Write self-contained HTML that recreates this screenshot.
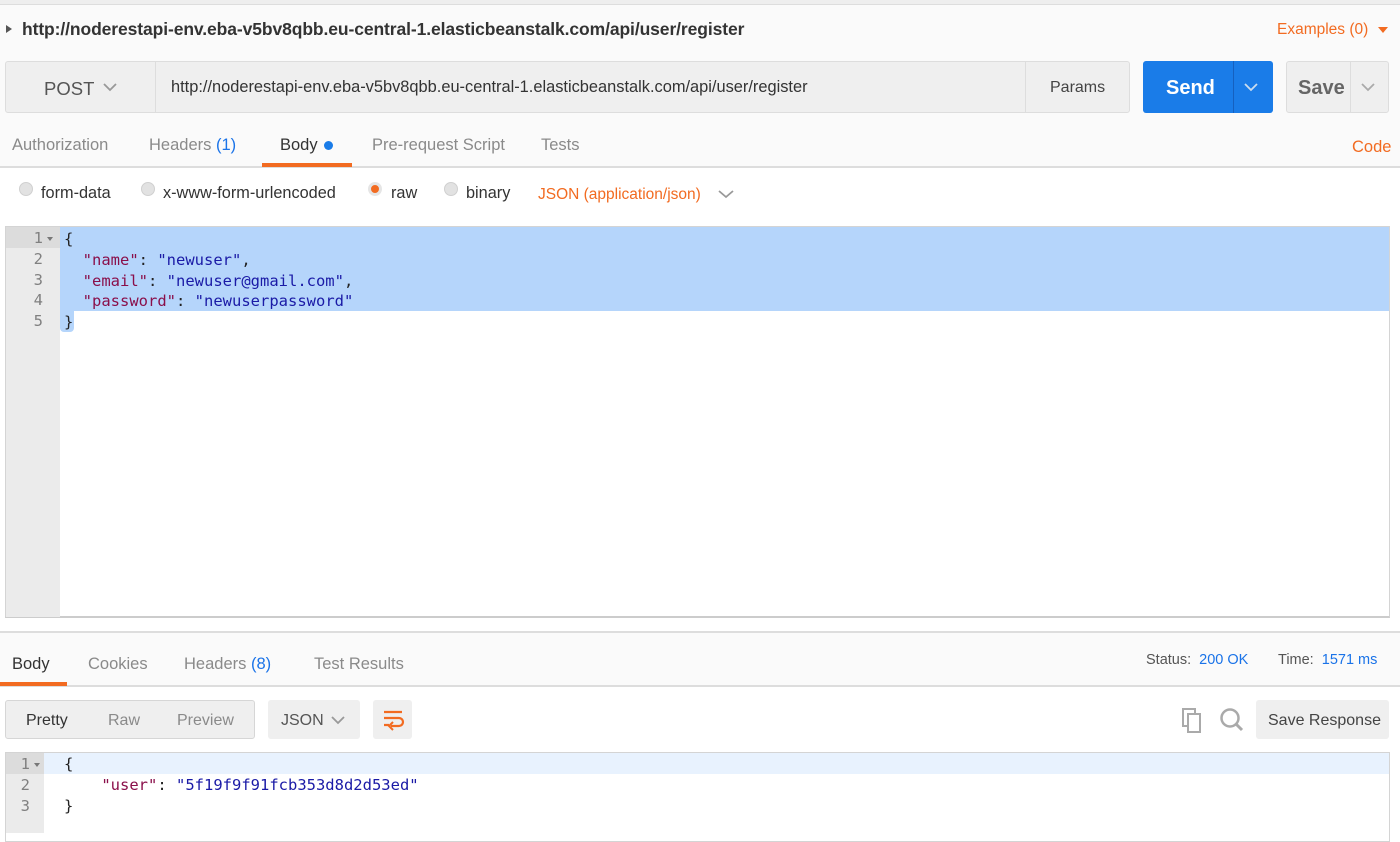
<!DOCTYPE html>
<html><head><meta charset="utf-8"><style>
*{box-sizing:border-box;margin:0;padding:0}
body{width:1400px;height:832px;overflow:hidden;background:#fff;font-family:"Liberation Sans",sans-serif;position:relative;color:#333}
.a{position:absolute}
.mono{font-family:"DejaVu Sans Mono","Liberation Mono",monospace;font-size:15.5px}
.gray{color:#808080}
.tab{font-size:16.5px;color:#8a8a8a}
.blue{color:#1a73e8}
.or{color:#f26b21}
.radio{width:14px;height:14px;border-radius:50%;background:#e2e2e2;border:1px solid #d0d0d0}
.k{color:#8a0f4a}.s{color:#1a1aa6}
</style></head><body>
<div class="a" style="left:0;top:0;width:1400px;height:167px;background:#fafafa"></div>
<div class="a" style="left:0;top:0;width:1400px;height:5px;background:#eee;border-bottom:1px solid #ddd"></div>
<div class="a" style="left:6px;top:25px;width:0;height:0;border-left:6px solid #555;border-top:4px solid transparent;border-bottom:4px solid transparent"></div>
<div class="a" style="left:22px;top:19px;font-size:17.5px;color:#333;font-weight:bold;letter-spacing:-0.1px">http://noderestapi-env.eba-v5bv8qbb.eu-central-1.elasticbeanstalk.com/api/user/register</div>
<div class="a or" style="left:1277px;top:21px;font-size:15.5px">Examples (0)</div>
<div class="a" style="left:1378px;top:27px;border-top:6px solid #f26b21;border-left:5px solid transparent;border-right:5px solid transparent"></div>

<div class="a" style="left:5px;top:61px;width:1125px;height:52px;background:#efefef;border:1px solid #ddd;border-radius:3px"></div>
<div class="a" style="left:155px;top:62px;width:1px;height:50px;background:#ddd"></div>
<div class="a" style="left:1025px;top:62px;width:1px;height:50px;background:#ddd"></div>
<div class="a" style="left:44px;top:78px;font-size:18.5px;color:#555">POST</div>
<svg class="a" style="left:102px;top:82px" width="16" height="10"><path d="M2 2l6 6 6-6" stroke="#999" stroke-width="1.8" fill="none"/></svg>
<div class="a" style="left:171px;top:78px;font-size:16.4px;color:#333">http://noderestapi-env.eba-v5bv8qbb.eu-central-1.elasticbeanstalk.com/api/user/register</div>
<div class="a" style="left:1050px;top:79px;font-size:16px;color:#444">Params</div>
<div class="a" style="left:1143px;top:61px;width:130px;height:52px;background:#1a7ce8;border-radius:3px"></div>
<div class="a" style="left:1233px;top:61px;width:1px;height:52px;background:#1560bf"></div>
<div class="a" style="left:1166px;top:77px;font-size:20px;color:#fff;font-weight:bold">Send</div>
<svg class="a" style="left:1243px;top:82px" width="16" height="10"><path d="M2 2l6 6 6-6" stroke="#cde" stroke-width="1.8" fill="none"/></svg>
<div class="a" style="left:1286px;top:61px;width:103px;height:52px;background:#efefef;border:1px solid #ddd;border-radius:3px"></div>
<div class="a" style="left:1350px;top:62px;width:1px;height:50px;background:#ddd"></div>
<div class="a" style="left:1298px;top:77px;font-size:20px;color:#666;font-weight:bold">Save</div>
<svg class="a" style="left:1360px;top:82px" width="16" height="10"><path d="M2 2l6 6 6-6" stroke="#aaa" stroke-width="1.8" fill="none"/></svg>

<div class="a tab" style="left:12px;top:136px">Authorization</div>
<div class="a tab" style="left:149px;top:136px">Headers <span class="blue">(1)</span></div>
<div class="a" style="left:280px;top:136px;font-size:16.5px;color:#333">Body</div>
<div class="a" style="left:324px;top:141px;width:9px;height:9px;border-radius:50%;background:#1a7ce8"></div>
<div class="a tab" style="left:372px;top:136px">Pre-request Script</div>
<div class="a tab" style="left:541px;top:136px">Tests</div>
<div class="a or" style="left:1352px;top:138px;font-size:16.5px">Code</div>
<div class="a" style="left:0;top:166px;width:1400px;height:2px;background:#ddd"></div>
<div class="a" style="left:262px;top:163px;width:90px;height:4px;background:#f26b21"></div>

<div class="a radio" style="left:19px;top:182px"></div>
<div class="a" style="left:41px;top:184px;font-size:16.3px">form-data</div>
<div class="a radio" style="left:141px;top:182px"></div>
<div class="a" style="left:163px;top:184px;font-size:16.3px">x-www-form-urlencoded</div>
<div class="a radio" style="left:368px;top:182px;background:#f26b21;border:3px solid #e5e5e5"></div>
<div class="a" style="left:391px;top:184px;font-size:16.3px">raw</div>
<div class="a radio" style="left:444px;top:182px"></div>
<div class="a" style="left:466px;top:184px;font-size:16.3px">binary</div>
<div class="a or" style="left:538px;top:186px;font-size:15.5px">JSON (application/json)</div>
<svg class="a" style="left:717px;top:189px" width="18" height="10"><path d="M2 2l7 6 7-6" stroke="#999" stroke-width="1.8" fill="none"/></svg>

<div class="a" style="left:5px;top:226px;width:1385px;height:392px;border:1px solid #d4d4d4;border-bottom:2px solid #ccc;background:#fff"></div>
<div class="a" style="left:6px;top:227px;width:54px;height:390px;background:#ebebeb"></div>
<div class="a" style="left:6px;top:227px;width:54px;height:21px;background:#dcdcdc"></div>
<div class="a" style="left:60px;top:227px;width:1329px;height:84px;background:#b5d5fb"></div>
<div class="a" style="left:60px;top:311px;width:14px;height:21px;background:#b5d5fb;border-radius:0 0 4px 4px"></div>
<div class="a mono gray" style="left:0;top:228px;width:43px;text-align:right;line-height:20.8px">1<br>2<br>3<br>4<br>5</div>
<div class="a" style="left:47px;top:237px;border-top:4px solid #777;border-left:3px solid transparent;border-right:3px solid transparent"></div>
<pre class="a mono" style="left:64px;top:229px;line-height:20.8px;color:#222">{
  <span class="k">"name"</span>: <span class="s">"newuser"</span>,
  <span class="k">"email"</span>: <span class="s">"newuser@gmail.com"</span>,
  <span class="k">"password"</span>: <span class="s">"newuserpassword"</span>
}</pre>

<div class="a" style="left:0;top:631px;width:1400px;height:55px;background:#fafafa;border-top:2px solid #ddd"></div>
<div class="a" style="left:12px;top:655px;font-size:16.5px;color:#333">Body</div>
<div class="a tab" style="left:88px;top:655px">Cookies</div>
<div class="a tab" style="left:184px;top:655px">Headers <span class="blue">(8)</span></div>
<div class="a tab" style="left:314px;top:655px">Test Results</div>
<div class="a" style="left:1146px;top:652px;font-size:14.5px;color:#555">Status: <span class="blue" style="margin-left:4px">200 OK</span></div>
<div class="a" style="left:1278px;top:652px;font-size:14.5px;color:#555">Time: <span class="blue" style="margin-left:4px">1571 ms</span></div>
<div class="a" style="left:0;top:685px;width:1400px;height:2px;background:#ddd"></div>
<div class="a" style="left:0;top:682px;width:67px;height:4px;background:#f26b21"></div>

<div class="a" style="left:5px;top:700px;width:250px;height:39px;background:#efefef;border:1px solid #d6d6d6;border-radius:3px"></div>
<div class="a" style="left:26px;top:712px;font-size:16px;color:#333">Pretty</div>
<div class="a tab" style="left:108px;top:712px;font-size:16px">Raw</div>
<div class="a tab" style="left:177px;top:712px;font-size:16px">Preview</div>
<div class="a" style="left:268px;top:700px;width:92px;height:39px;background:#efefef;border-radius:3px"></div>
<div class="a" style="left:281px;top:712px;font-size:16px;color:#555">JSON</div>
<svg class="a" style="left:330px;top:715px" width="16" height="10"><path d="M2 2l6 6 6-6" stroke="#999" stroke-width="1.8" fill="none"/></svg>
<div class="a" style="left:373px;top:700px;width:39px;height:39px;background:#efefef;border-radius:3px"></div>
<svg class="a" style="left:380px;top:708px" width="26" height="24"><path d="M4 4h18M4 10h15a4 4 0 0 1 0 8h-8M4 17h5" stroke="#f26b21" stroke-width="2.2" fill="none"/><path d="M13 14l-4 4 4 4" stroke="#f26b21" stroke-width="2" fill="none"/></svg>
<svg class="a" style="left:1180px;top:706px" width="26" height="28"><rect x="3" y="3" width="12" height="17" fill="none" stroke="#aaa" stroke-width="2"/><rect x="8" y="8" width="12" height="18" fill="#fff" stroke="#aaa" stroke-width="2"/></svg>
<svg class="a" style="left:1218px;top:706px" width="28" height="28"><circle cx="12" cy="12" r="8.5" fill="none" stroke="#aaa" stroke-width="2.5"/><path d="M18 18l6 6" stroke="#aaa" stroke-width="3"/></svg>
<div class="a" style="left:1256px;top:700px;width:133px;height:39px;background:#efefef;border-radius:3px"></div>
<div class="a" style="left:1268px;top:712px;font-size:16px;color:#444">Save Response</div>

<div class="a" style="left:5px;top:752px;width:1385px;height:90px;border:1px solid #d4d4d4;background:#fff"></div>
<div class="a" style="left:6px;top:753px;width:38px;height:80px;background:#ebebeb"></div>
<div class="a" style="left:6px;top:753px;width:38px;height:21px;background:#dcdcdc"></div>
<div class="a" style="left:44px;top:753px;width:1345px;height:21px;background:#e8f2fe"></div>
<div class="a mono gray" style="left:0;top:754px;width:30px;text-align:right;line-height:21px">1<br>2<br>3</div>
<div class="a" style="left:34px;top:763px;border-top:4px solid #777;border-left:3px solid transparent;border-right:3px solid transparent"></div>
<pre class="a mono" style="left:64px;top:754px;line-height:21px;color:#222">{
    <span class="k">"user"</span>: <span class="s">"5f19f9f91fcb353d8d2d53ed"</span>
}</pre>
</body></html>
